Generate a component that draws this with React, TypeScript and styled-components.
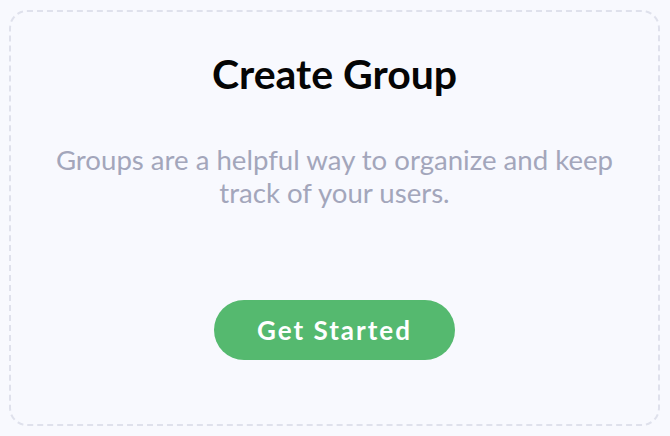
import React from 'react';
import styled, {createGlobalStyle} from 'styled-components';

const GlobalStyle = createGlobalStyle`
  html, body {
    margin: 0;
    padding: 0;
    background: #f8f9fe;
  }

  body {
    font-family: Lato, "Noto Sans", sans-serif;
  }
`;

function App() {
  return (
    <>
      <GlobalStyle />
      <Page>
        <Card>
          <Title>Create Group</Title>
          <Description>
            Groups are a helpful way to organize and keep track of your users.
          </Description>
          <StartButton>Get Started</StartButton>
        </Card>
      </Page>
    </>
  );
}

const Page = styled.div`
  width: 670px;
  height: 436px;
  padding: 10px 10px 10px 9px;
  box-sizing: border-box;
`;

const Card = styled.div`
  display: flex;
  flex-direction: column;
  align-items: center;

  height: 100%;
  box-sizing: border-box;
  padding: 38px 30px 0;
  border: 2px dashed #dfe1ec;
  border-radius: 18px;
`;

const Title = styled.h1`
  margin: 0;
  font-size: 41px;
  font-weight: 700;
  color: #050505;
  line-height: 48px;
`;

const Description = styled.p`
  margin: 45px 0 0;
  max-width: 590px;
  font-size: 27.6px;
  line-height: 33px;
  text-align: center;
  color: #a3a6bb;
`;

const StartButton = styled.button`
  margin-top: 91px;
  width: 241px;
  height: 60px;
  border: none;
  border-radius: 30px;
  background: #55b96f;
  color: #ffffff;
  font-family: Lato, "Noto Sans", sans-serif;
  font-size: 26px;
  font-weight: 700;
  letter-spacing: 2px;
  cursor: pointer;
`;

export default App;
